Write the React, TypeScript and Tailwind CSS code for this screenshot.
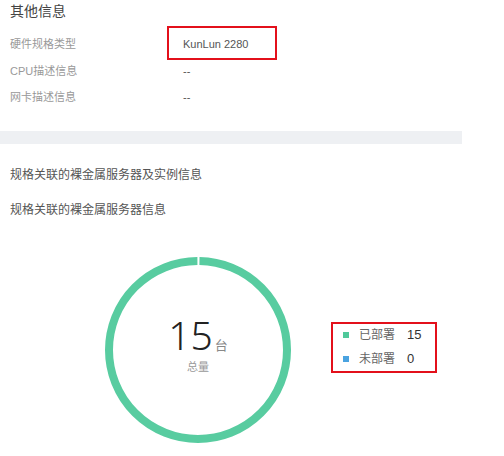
import React from "react"

const rows = [
	{ label: "硬件规格类型", value: "KunLun 2280", marked: true },
	{ label: "CPU描述信息", value: "--" },
	{ label: "网卡描述信息", value: "--" },
]

const legend = [
	{ name: "已部署", count: 15, color: "bg-[#4fc99a]" },
	{ name: "未部署", count: 0, color: "bg-[#4aa3e0]" },
]

const Donut = () => {
	const r = 89
	const c = 2 * Math.PI * r
	return (
		<div className="relative h-[186px] w-[186px] shrink-0">
			<svg width="186" height="186" viewBox="0 0 186 186">
				<circle
					cx="93"
					cy="93"
					r={r}
					fill="none"
					stroke="#58cca0"
					strokeWidth="8"
					strokeDasharray={`${c - 3} 3`}
					strokeDashoffset={-1.5}
					transform="rotate(-90 93 93)"
				/>
			</svg>
			<div className="absolute inset-0 flex flex-col items-center pt-[58px]">
				<div className="flex items-end">
					<span className="font-['Noto_Sans',sans-serif] text-[39px] font-light leading-[40px] text-[#222]">15</span>
					<span className="mb-[1px] ml-[2px] text-[13px] leading-[16px] text-[#888]">台</span>
				</div>
				<span className="mt-[5px] text-[11px] leading-[14px] text-[#999]">总量</span>
			</div>
		</div>
	)
}

export default function App() {
	return (
		<div className="h-[456px] w-[504px] overflow-hidden bg-white font-['Liberation_Sans','Noto_Sans_CJK_SC',sans-serif]">
			<div className="pl-[10px] pt-[1px]">
				<h2 className="text-[14px] leading-[20px] text-[#444]">其他信息</h2>
				<div className="mt-[10px] flex flex-col">
					{rows.map((row) => (
						<div key={row.label} className="flex h-[26.5px] items-center text-[11px]">
							<span className="w-[173px] text-[#999]">{row.label}</span>
							<span className="relative text-[#555]">
								{row.value}
								{row.marked && (
									<span className="absolute left-[-16px] top-[-10px] h-[34px] w-[110px] border-2 border-[#e3101b]" />
								)}
							</span>
						</div>
					))}
				</div>
			</div>
			<div className="mt-[20px] h-[13px] w-[462px] bg-[#eef0f3]" />
			<p className="mt-[21px] pl-[10px] text-[12px] leading-[20px] text-[#555]">规格关联的裸金属服务器及实例信息</p>
			<p className="mt-[15px] pl-[10px] text-[12px] leading-[20px] text-[#555]">规格关联的裸金属服务器信息</p>
			<div className="mt-[37px] flex pl-[105px]">
				<Donut />
				<div className="ml-[40px] mt-[65px] flex h-[51px] w-[106px] flex-col justify-center gap-[6px] self-start border-2 border-[#e3101b] pl-[10px]">
					{legend.map((item) => (
						<div key={item.name} className="flex items-center">
							<span className={`h-[6px] w-[6px] ${item.color}`} />
							<span className="ml-[10px] w-[48px] text-[12px] leading-[18px] text-[#666]">{item.name}</span>
							<span className="text-[13px] leading-[18px] text-[#333]">{item.count}</span>
						</div>
					))}
				</div>
			</div>
		</div>
	)
}
